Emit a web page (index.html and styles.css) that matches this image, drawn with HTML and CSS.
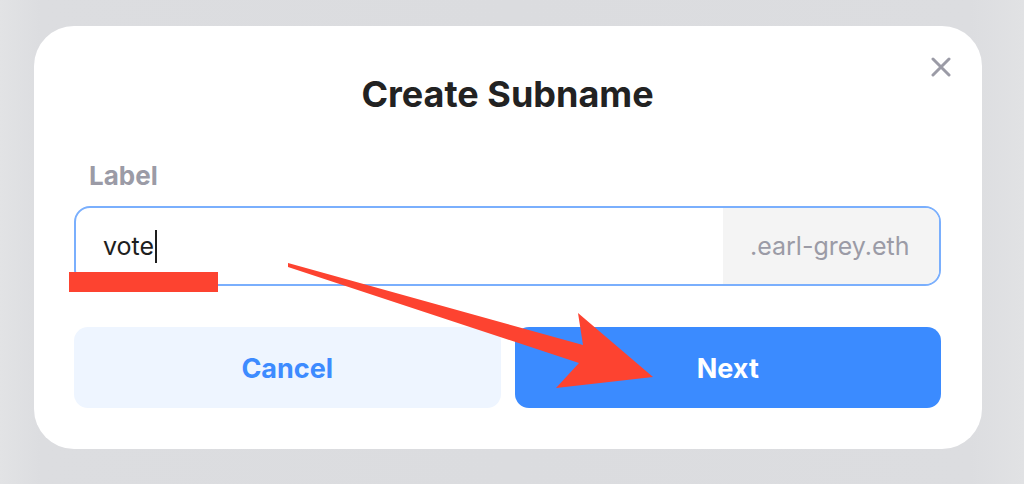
FILE: index.html
```html
<!DOCTYPE html>
<html>
<head>
<meta charset="utf-8">
<link rel="stylesheet" href="styles.css">
</head>
<body>
<div class="page">
  <div class="dialog">
    <button class="close" aria-label="Close">
      <svg width="20" height="20" viewBox="0 0 20 20"><path d="M2 2 L18 18 M18 2 L2 18" stroke="#9b9ba6" stroke-width="3" stroke-linecap="round"/></svg>
    </button>
    <h1 class="title">Create Subname</h1>
    <div class="label">Label</div>
    <div class="field">
      <div class="input"><span class="value">vote</span><span class="caret"></span></div>
      <div class="suffix">.earl-grey.eth</div>
    </div>
    <div class="actions">
      <button class="btn btn-cancel">Cancel</button>
      <button class="btn btn-next">Next</button>
    </div>
  </div>
</div>
<svg class="annot" width="1024" height="484" viewBox="0 0 1024 484">
  <rect x="69" y="272" width="149" height="20" fill="#fd4330"/>
  <polygon points="288,263 583,345 578,313 653,377 556,388 579,363 288,267" fill="#fd4330"/>
</svg>
</body>
</html>
```
FILE: styles.css
```css
* { box-sizing: border-box; }
html, body { margin: 0; padding: 0; }
body {
  width: 1024px;
  height: 484px;
  overflow: hidden;
  font-family: Inter, "Noto Sans", sans-serif;
  background: linear-gradient(90deg, #e2e3e5 0px, #dcdde0 40px, #dbdcdf 50%, #dcdde0 970px, #e1e2e4 1024px);
  position: relative;
}
.page {
  padding: 26px 42px 35px 34px;
}
.dialog {
  position: relative;
  width: 948px;
  height: 423px;
  background: #fff;
  border-radius: 40px;
  padding: 46px 41px 41px 40px;
  display: flex;
  flex-direction: column;
}
.close {
  position: absolute;
  left: 897px;
  top: 31px;
  width: 20px;
  height: 20px;
  padding: 0;
  border: 0;
  background: none;
  display: flex;
}
.title {
  margin: 0 0 45px;
  font-size: 36px;
  line-height: 44px;
  font-weight: 700;
  color: #222222;
  text-align: center;
}
.label {
  font-size: 26px;
  line-height: 30px;
  font-weight: 700;
  color: #9b9ba6;
  padding-left: 15px;
  margin-bottom: 15px;
}
.field {
  height: 80px;
  border: 2px solid #7aaffd;
  border-radius: 16px;
  display: flex;
  overflow: hidden;
}
.input {
  flex: 1;
  display: flex;
  align-items: center;
  padding-left: 27px;
}
.value {
  font-size: 25px;
  color: #1e1e1e;
}
.caret {
  width: 2px;
  height: 33px;
  background: #1e1e1e;
  margin-left: 1px;
}
.suffix {
  width: 216px;
  background: #f4f4f4;
  display: flex;
  align-items: center;
  padding-left: 27px;
  font-size: 25px;
  color: #9b9ba6;
}
.actions {
  margin-top: 41px;
  display: flex;
  gap: 14px;
}
.btn {
  flex: 1;
  height: 81px;
  border: 0;
  border-radius: 14px;
  font-family: Inter, "Noto Sans", sans-serif;
  font-size: 27px;
  font-weight: 700;
  padding-top: 2px;
}
.btn-cancel {
  background: #eef5ff;
  color: #3d8bff;
}
.btn-next {
  background: #3b8bff;
  color: #ffffff;
}
.annot {
  position: absolute;
  left: 0;
  top: 0;
}
```
